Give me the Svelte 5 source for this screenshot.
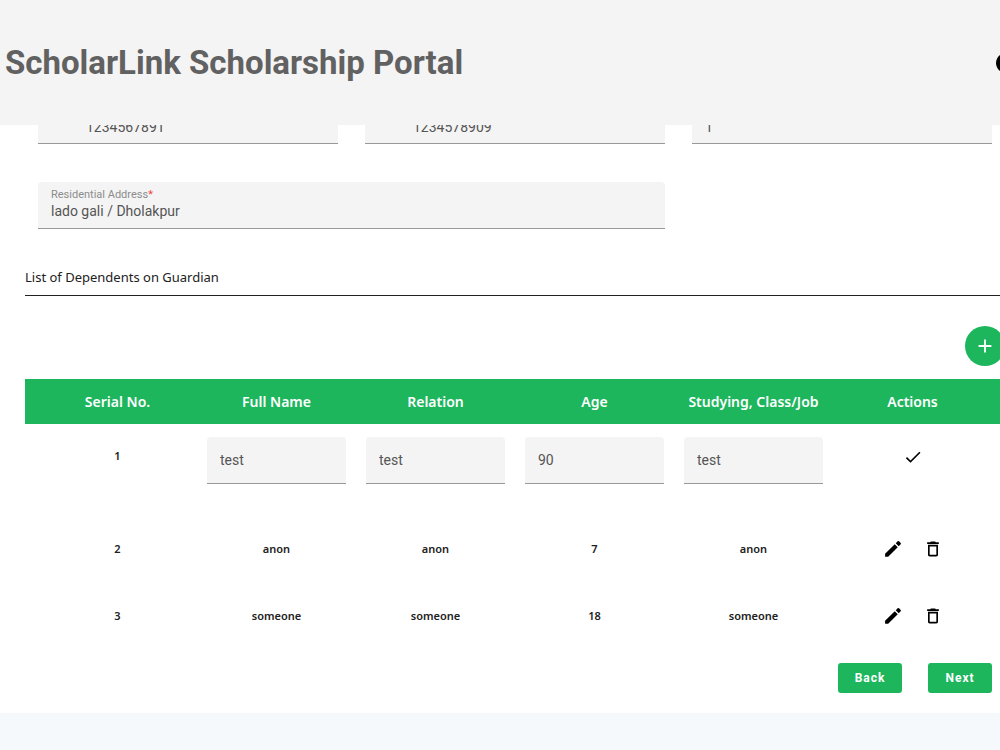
<script lang="ts">
	type Dependent = { id: number; name: string; relation: string; age: string; studying: string };

	const columns = ['Serial No.', 'Full Name', 'Relation', 'Age', 'Studying, Class/Job', 'Actions'];
	const keys = ['name', 'relation', 'age', 'studying'] as const;

	let guardian = $state({
		phone: '1234567891',
		altPhone: '1234578909',
		members: '1',
		address: 'lado gali / Dholakpur'
	});

	let dependents = $state<Dependent[]>([
		{ id: 1, name: 'test', relation: 'test', age: '90', studying: 'test' },
		{ id: 2, name: 'anon', relation: 'anon', age: '7', studying: 'anon' },
		{ id: 3, name: 'someone', relation: 'someone', age: '18', studying: 'someone' }
	]);
	let editingId = $state<number | null>(1);

	function addDependent() {
		const id = Math.max(0, ...dependents.map((d) => d.id)) + 1;
		dependents.push({ id, name: '', relation: '', age: '', studying: '' });
		editingId = id;
	}

	function removeDependent(id: number) {
		dependents = dependents.filter((d) => d.id !== id);
	}
</script>

<div class="page">
	<header class="topbar">
		<h1>ScholarLink Scholarship Portal</h1>
		<button class="icon-btn" aria-label="Account">
			<svg viewBox="0 0 24 24" width="24" height="24">
				<path d="M12 2C6.48 2 2 6.48 2 12s4.48 10 10 10 10-4.48 10-10S17.52 2 12 2zm0 4c1.93 0 3.5 1.57 3.5 3.5S13.93 13 12 13s-3.5-1.57-3.5-3.5S10.07 6 12 6zm0 14c-2.03 0-4.43-.82-6.14-2.88C7.55 15.8 9.68 15 12 15s4.45.8 6.14 2.12C16.43 19.18 14.03 20 12 20z" />
			</svg>
		</button>
	</header>

	<main>
		<div class="fields">
			<div class="field phone">
				<input aria-label="Phone Number" bind:value={guardian.phone} />
			</div>
			<div class="field phone">
				<input aria-label="Alternate Phone Number" bind:value={guardian.altPhone} />
			</div>
			<div class="field">
				<input aria-label="Number of Dependents" bind:value={guardian.members} />
			</div>
			<div class="field labelled wide">
				<label for="address">Residential Address<span class="required">*</span></label>
				<input id="address" bind:value={guardian.address} />
			</div>
		</div>

		<h2>List of Dependents on Guardian</h2>

		<div class="add-row">
			<button class="add-btn" aria-label="Add dependent" onclick={addDependent}>
				<svg viewBox="0 0 24 24" width="22" height="22">
					<path d="M19 13h-6v6h-2v-6H5v-2h6V5h2v6h6v2z" />
				</svg>
			</button>
		</div>

		<table>
			<thead>
				<tr>
					{#each columns as column}
						<th scope="col">{column}</th>
					{/each}
				</tr>
			</thead>
			<tbody>
				{#each dependents as dependent, i (dependent.id)}
					{#if editingId === dependent.id}
						<tr class="editing">
							<td><span class="serial">{i + 1}</span></td>
							{#each keys as key, k}
								<td>
									<div class="field">
										<input aria-label={columns[k + 1]} bind:value={dependent[key]} />
									</div>
								</td>
							{/each}
							<td class="actions">
								<button class="icon-btn" aria-label="Save" onclick={() => (editingId = null)}>
									<svg viewBox="0 0 24 24" width="20" height="20">
										<path d="M9 16.17 4.83 12l-1.42 1.41L9 19 21 7l-1.41-1.41z" />
									</svg>
								</button>
							</td>
						</tr>
					{:else}
						<tr>
							<td>{i + 1}</td>
							{#each keys as key}
								<td>{dependent[key]}</td>
							{/each}
							<td class="actions">
								<button class="icon-btn" aria-label="Edit" onclick={() => (editingId = dependent.id)}>
									<svg viewBox="0 0 24 24" width="20" height="20">
										<path d="M2.5 17.8v2.8c0 .5.3.8.8.8h2.9L17.7 9.9l-3.6-3.6L2.5 17.8zM21.2 6.4a1.2 1.2 0 0 0 0-1.7l-1.9-1.9a1.2 1.2 0 0 0-1.7 0l-2.3 2.3 3.6 3.6 2.3-2.3z" />
									</svg>
								</button>
								<button class="icon-btn" aria-label="Delete" onclick={() => removeDependent(dependent.id)}>
									<svg viewBox="0 0 24 24" width="20" height="20">
										<path d="M6 19c0 1.1.9 2 2 2h8c1.1 0 2-.9 2-2V7H6v12zM8 9h8v10H8V9zm7.5-5-1-1h-5l-1 1H5v2h14V4z" />
									</svg>
								</button>
							</td>
						</tr>
					{/if}
				{/each}
			</tbody>
		</table>

		<div class="nav-buttons">
			<button>Back</button>
			<button>Next</button>
		</div>
	</main>
</div>

<style>
	:global(body) {
		margin: 0;
		background: #f5f9fc;
	}

	.page {
		overflow: hidden;
		font-family: Roboto, sans-serif;
		color: #212121;
	}

	.topbar {
		position: relative;
		z-index: 1;
		display: flex;
		align-items: center;
		justify-content: space-between;
		height: 125px;
		margin-right: -28px;
		padding-left: 5px;
		background: #f4f4f4;
	}

	h1 {
		margin: 0;
		font-size: 33px;
		font-weight: 700;
		color: #616161;
	}

	main {
		padding: 0 0 20px 25px;
		margin-right: -5px;
		background: #fff;
	}

	/* the first row of fields is scrolled under the top bar */
	.fields {
		display: grid;
		grid-template-columns: repeat(3, 1fr);
		gap: 38px 27px;
		margin-top: -28px;
		padding: 0 13px;
	}

	.field {
		box-sizing: border-box;
		display: flex;
		flex-direction: column;
		justify-content: center;
		height: 47px;
		padding: 0 13px;
		background: #f4f4f4;
		border-bottom: 1px solid #999;
		border-radius: 4px 4px 0 0;
	}

	.field.phone {
		padding-left: 48px;
	}

	.field.wide {
		grid-column: span 2;
	}

	.fields .field:not(.labelled) {
		padding-top: 14px;
	}

	.field label {
		font-size: 11px;
		line-height: 12px;
		color: #8c8c8c;
	}

	.required {
		color: #f44336;
	}

	.field input {
		width: 100%;
		height: 20px;
		padding: 0;
		border: none;
		outline: none;
		background: none;
		font-family: Roboto, sans-serif;
		font-size: 14px;
		color: #555;
	}

	h2 {
		margin: 38px 0 0;
		padding-bottom: 8px;
		border-bottom: 1px solid #212121;
		font-family: "Noto Sans", sans-serif;
		font-size: 13px;
		font-weight: 400;
		line-height: 20px;
	}

	.add-row {
		display: flex;
		justify-content: flex-end;
		padding: 30px 0 13px;
	}

	.add-btn {
		display: flex;
		align-items: center;
		justify-content: center;
		width: 40px;
		height: 40px;
		padding: 0;
		border: none;
		border-radius: 50%;
		background: #1db65d;
		fill: #fff;
		cursor: pointer;
	}

	table {
		display: block;
		font-family: "Noto Sans", sans-serif;
	}

	thead,
	tbody {
		display: block;
	}

	thead {
		background: #1db65d;
		color: #fff;
	}

	tr {
		display: grid;
		grid-template-columns: repeat(6, 1fr);
		align-items: center;
		height: 67px;
		padding: 0 13px;
	}

	thead tr {
		height: 45px;
	}

	tr.editing {
		box-sizing: border-box;
		align-items: start;
		height: 91px;
		padding-top: 13px;
	}

	th {
		padding: 0;
		font-size: 14px;
		font-weight: 600;
		white-space: nowrap;
	}

	td {
		padding: 0 10px;
		font-size: 11px;
		font-weight: 600;
		text-align: center;
	}

	.serial {
		line-height: 38px;
	}

	.actions {
		display: flex;
		justify-content: center;
	}

	.icon-btn {
		padding: 10px;
		border: none;
		background: none;
		cursor: pointer;
	}

	.icon-btn svg {
		display: block;
	}

	.nav-buttons {
		display: flex;
		justify-content: flex-end;
		gap: 26px;
		padding: 14px 13px 0;
	}

	.nav-buttons button {
		width: 64px;
		height: 30px;
		padding: 0;
		border: none;
		border-radius: 3px;
		background: #1db65d;
		color: #fff;
		font-family: inherit;
		font-size: 12px;
		font-weight: 700;
		letter-spacing: 1px;
		cursor: pointer;
	}
</style>
